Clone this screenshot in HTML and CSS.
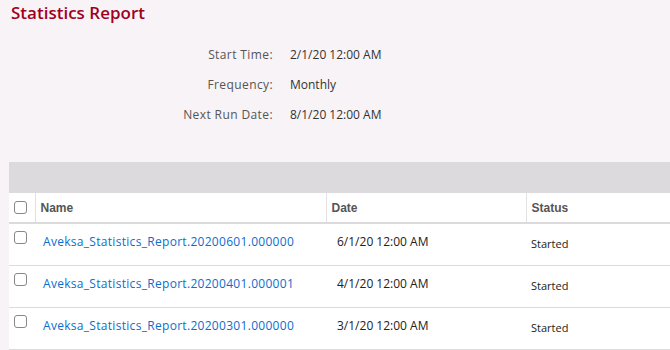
FILE: index.html
```html
<!DOCTYPE html>
<html lang="en">
<head>
    <meta charset="UTF-8">
    <meta name="viewport" content="width=device-width, initial-scale=1.0">
    <title>Statistics Report</title>
    <link rel="stylesheet" href="styles.css">
</head>
<body>
    <div class="page">
        <h1 class="title">Statistics Report</h1>

        <div class="details">
            <div class="label">Start Time:</div>
            <div class="value">2/1/20 12:00 AM</div>

            <div class="label">Frequency:</div>
            <div class="value">Monthly</div>

            <div class="label">Next Run Date:</div>
            <div class="value">8/1/20 12:00 AM</div>
        </div>

        <div class="results">
            <div class="toolbar"></div>
            <table class="grid">
                <thead>
                    <tr>
                        <th class="col-check"><span class="check"></span></th>
                        <th class="col-name">Name</th>
                        <th class="col-date">Date</th>
                        <th class="col-status">Status</th>
                    </tr>
                </thead>
                <tbody>
                    <tr>
                        <td class="col-check"><span class="check"></span></td>
                        <td class="col-name"><a href="#">Aveksa_Statistics_Report.20200601.000000</a></td>
                        <td class="col-date">6/1/20 12:00 AM</td>
                        <td class="col-status">Started</td>
                    </tr>
                    <tr>
                        <td class="col-check"><span class="check"></span></td>
                        <td class="col-name"><a href="#">Aveksa_Statistics_Report.20200401.000001</a></td>
                        <td class="col-date">4/1/20 12:00 AM</td>
                        <td class="col-status">Started</td>
                    </tr>
                    <tr>
                        <td class="col-check"><span class="check"></span></td>
                        <td class="col-name"><a href="#">Aveksa_Statistics_Report.20200301.000000</a></td>
                        <td class="col-date">3/1/20 12:00 AM</td>
                        <td class="col-status">Started</td>
                    </tr>
                </tbody>
            </table>
        </div>
    </div>
</body>
</html>
```

FILE: styles.css
```css
* {
    margin: 0;
    padding: 0;
    box-sizing: border-box;
}

body {
    background-color: #f7f3f7;
    font-family: "Open Sans", "Noto Sans", sans-serif;
    font-size: 12px;
    color: #333;
    overflow: hidden;
}

.title {
    font-size: 17px;
    font-weight: 600;
    color: #a0001e;
    padding: 1px 0 0 11px;
    height: 40px;
}

.details {
    display: grid;
    grid-template-columns: 273px auto;
    column-gap: 17px;
    row-gap: 0;
}

.label,
.value {
    height: 30px;
    line-height: 30px;
}

.label {
    text-align: right;
    color: #555;
    letter-spacing: 0.4px;
}

.value {
    color: #333;
}

.results {
    margin: 32px 0 0 9px;
    background: #fff;
}

.toolbar {
    height: 31px;
    background-color: #dcdadc;
}

.grid {
    width: 100%;
    border-collapse: collapse;
    table-layout: fixed;
}

.grid th {
    height: 30px;
    font-family: "Liberation Sans", Arial, sans-serif;
    font-size: 12px;
    font-weight: bold;
    color: #555;
    text-align: left;
    border-bottom: 2px solid #dcdadc;
    border-right: 1px solid #e2e0e2;
    padding-left: 5px;
}

.grid th.col-status {
    border-right: none;
}

.grid td {
    height: 42px;
    vertical-align: top;
    border-bottom: 1px solid #dcdadc;
    line-height: 16px;
    padding-top: 10px;
}

.col-check {
    width: 26px;
}

.col-name {
    width: 291px;
}

.col-date {
    width: 200px;
}

.grid th.col-check {
    padding-left: 5px;
}

.grid td.col-check {
    padding: 7px 0 0 5px;
}

.grid td.col-name {
    padding-left: 8px;
}

.grid td.col-date {
    padding-left: 11px;
    color: #222;
}

.grid td.col-status {
    padding-left: 5px;
    padding-top: 12px;
    font-size: 11px;
    color: #222;
}

.check {
    display: block;
    width: 13px;
    height: 13px;
    border: 1px solid #888;
    border-radius: 3px;
    background: #fff;
}

.grid a {
    color: #0a6ecd;
    text-decoration: none;
    letter-spacing: 0.3px;
}
```
